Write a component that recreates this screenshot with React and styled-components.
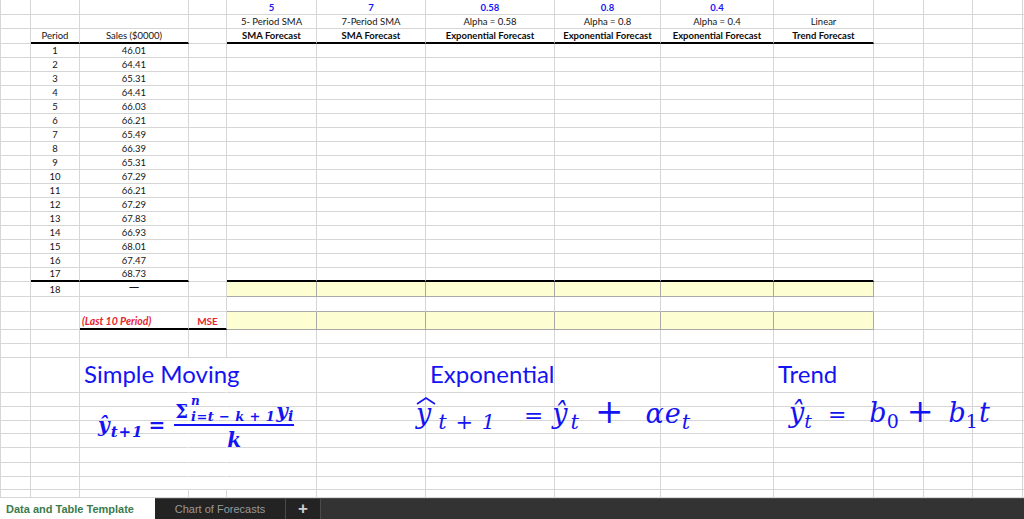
import React from 'react';
import styled, { createGlobalStyle } from 'styled-components';

const BLUE = '#1414f2';
const RED = '#e5262f';
const GRID = '#d6d6d6';
const YBORDER = '#a9a9a9';
const YELLOW = '#fefed3';

const GlobalStyle = createGlobalStyle`
  html, body { margin: 0; padding: 0; background: #fff; }
  body { overflow: hidden; font-family: Lato, "Liberation Sans", sans-serif; }
`;

const COL_WIDTHS = [30, 49, 109, 38, 90, 109, 129, 106, 113, 100, 50, 49, 50];
const COL_TEMPLATE = COL_WIDTHS.map((w) => `${w}px`).join(' ') + ' 1fr';
const NCOLS = COL_WIDTHS.length + 1;

const FORECAST = [4, 5, 6, 7, 8, 9];
const SALES = ['46.01', '64.41', '65.31', '64.41', '66.03', '66.21', '65.49', '66.39', '65.31', '67.29', '66.21', '67.29', '67.83', '66.93', '68.01', '67.47', '68.73'];

const ROWS = [];
ROWS.push({ h: 15, cells: { 4: ['5', 'param'], 5: ['7', 'param'], 6: ['0.58', 'param'], 7: ['0.8', 'param'], 8: ['0.4', 'param'] } });
ROWS.push({ h: 14, cells: { 4: ['5- Period SMA'], 5: ['7-Period SMA'], 6: ['Alpha = 0.58'], 7: ['Alpha = 0.8'], 8: ['Alpha = 0.4'], 9: ['Linear'] } });
ROWS.push({
  h: 15,
  thick: [1, 2, ...FORECAST],
  cells: {
    1: ['Period'], 2: ['Sales ($0000)'],
    4: ['SMA Forecast', 'head'], 5: ['SMA Forecast', 'head'],
    6: ['Exponential Forecast', 'head'], 7: ['Exponential Forecast', 'head'], 8: ['Exponential Forecast', 'head'],
    9: ['Trend Forecast', 'head'],
  },
});
SALES.forEach((v, i) => ROWS.push({ h: 14, thick: i === 16 ? [1, 2, ...FORECAST] : [], cells: { 1: [String(i + 1)], 2: [v] } }));
ROWS.push({ h: 15, yellow: FORECAST, cells: { 1: ['18'], 2: ['\u2014', 'dash'] } });
ROWS.push({ h: 15, edge: FORECAST, cells: {} });
ROWS.push({ h: 18, yellow: FORECAST, thick: [2, 3], cells: { 2: ['(Last 10 Period)', 'note'], 3: ['MSE', 'mse'] } });
ROWS.push({ h: 14 });
ROWS.push({ h: 14 });
[35, 14, 14, 13, 14, 15, 14, 13].forEach((h) => ROWS.push({ h, merged: true }));
ROWS.push({ h: 8 });

const ROW_TEMPLATE = ROWS.map((r) => `${r.h}px`).join(' ');

const Page = styled.div`
  width: 1024px;
  height: 519px;
  display: flex;
  flex-direction: column;
  overflow: hidden;
  background: #fff;
`;

const SheetArea = styled.div`
  position: relative;
  height: 498px;
  overflow: hidden;
`;

const Grid = styled.div`
  display: grid;
  grid-template-columns: ${COL_TEMPLATE};
  grid-template-rows: ${ROW_TEMPLATE};
  border-left: 1px solid ${GRID};
  box-sizing: border-box;
  width: 1024px;
  height: 498px;
`;

const Cell = styled.div`
  box-sizing: border-box;
  min-width: 0;
  display: flex;
  align-items: flex-end;
  justify-content: ${(p) => (p.$left ? 'flex-start' : 'center')};
  padding: 0 2px 2px;
  white-space: nowrap;
  overflow: visible;
  background: ${(p) => (p.$yellow ? YELLOW : '#fff')};
  border-right: 1px solid ${(p) => (p.$hideRight ? '#fff' : p.$yellow ? YBORDER : GRID)};
  border-bottom: ${(p) => (p.$thick ? '2px solid #000' : `1px solid ${p.$yellow || p.$edge ? YBORDER : GRID}`)};
`;

const KIND = {
  plain: { size: 9.5, weight: 400, style: 'normal', color: '#141414' },
  param: { size: 9.5, weight: 700, style: 'normal', color: BLUE },
  head: { size: 9.5, weight: 700, style: 'normal', color: '#0c0c0c' },
  dash: { size: 14, weight: 400, style: 'normal', color: '#141414' },
  note: { size: 10.5, weight: 700, style: 'italic', color: RED },
  mse: { size: 10, weight: 700, style: 'normal', color: RED },
};

const CellText = styled.span`
  font-family: Lato, "Liberation Sans", sans-serif;
  font-size: ${(p) => KIND[p.$kind].size}px;
  font-weight: ${(p) => KIND[p.$kind].weight};
  font-style: ${(p) => KIND[p.$kind].style};
  color: ${(p) => KIND[p.$kind].color};
  line-height: 1;
`;

/* floating text boxes drawn over the sheet */
const SectionLabel = styled.div`
  position: absolute;
  left: ${(p) => p.$x}px;
  top: ${(p) => p.$y}px;
  font-family: Lato, "Liberation Sans", sans-serif;
  font-size: 24px;
  line-height: 24px;
  color: ${BLUE};
  white-space: nowrap;
`;

const MathLine = styled.div`
  position: absolute;
  left: ${(p) => p.$x}px;
  top: ${(p) => p.$y}px;
  font-family: "DejaVu Serif", "Liberation Serif", serif;
  font-style: italic;
  font-weight: ${(p) => (p.$bold ? 700 : 400)};
  font-size: ${(p) => p.$size}px;
  line-height: ${(p) => p.$size}px;
  color: ${BLUE};
  white-space: nowrap;
`;

const MVar = styled.span`
  margin-left: ${(p) => p.$ml || 0}px;
`;

const MSub = styled.span`
  font-size: ${(p) => p.$size}px;
  line-height: 1;
  vertical-align: ${(p) => p.$shift}px;
  margin-left: ${(p) => p.$ml || 0}px;
  letter-spacing: ${(p) => p.$ls || 0}px;
  font-style: ${(p) => (p.$upright ? 'normal' : 'italic')};
`;

const MOp = styled.span`
  font-style: normal;
  font-size: ${(p) => (p.$size ? `${p.$size}px` : 'inherit')};
  margin-left: ${(p) => p.$ml || 0}px;
  margin-right: ${(p) => p.$mr || 0}px;
`;

const HatWrap = styled.span`
  position: relative;
  display: inline-block;
  margin-left: ${(p) => p.$ml || 0}px;
`;

const WideHat = styled.svg`
  position: absolute;
  left: 0px;
  top: -3px;
  overflow: visible;
`;

const Frac = styled.span`
  display: inline-block;
  vertical-align: -15px;
  text-align: center;
`;

const Num = styled.span`
  display: block;
  line-height: 25px;
  border-bottom: 2px solid ${BLUE};
  padding: 0 1px;
`;

const Den = styled.span`
  display: block;
  line-height: 28px;
`;

const Sigma = styled.span`
  font-style: normal;
  font-size: 18px;
`;

const Limits = styled.span`
  display: inline-block;
  vertical-align: -3px;
  line-height: 15px;
  text-align: left;
  margin-left: 3px;
`;

const LimitUpper = styled.span`
  display: block;
  font-size: 12px;
`;

const LimitLower = styled.span`
  display: block;
  font-size: 13px;
  letter-spacing: 0.4px;
`;

/* sheet tabs */
const TabBar = styled.div`
  height: 21px;
  display: flex;
  background: #333;
  font-family: "Liberation Sans", Arial, sans-serif;
`;

const ActiveTab = styled.div`
  width: 155px;
  background: #fff;
  color: #3b7b4c;
  font-size: 11px;
  font-weight: 700;
  display: flex;
  align-items: center;
  padding-left: 6px;
  box-sizing: border-box;
`;

const DarkTab = styled.div`
  width: ${(p) => p.$w}px;
  box-sizing: border-box;
  background: #232323;
  border-top: 1px solid #4a4a4a;
  border-right: 1px solid #4a4a4a;
  color: ${(p) => (p.$plus ? '#d0d0d0' : '#999')};
  font-size: ${(p) => (p.$plus ? 17 : 11)}px;
  font-weight: ${(p) => (p.$plus ? 700 : 400)};
  display: flex;
  align-items: center;
  justify-content: center;
`;

const TabFiller = styled.div`
  flex: 1;
  border-top: 1px solid #4a4a4a;
`;

function Sheet() {
  const cells = [];
  ROWS.forEach((row, r) => {
    for (let c = 0; c < NCOLS; c += 1) {
      const content = row.cells && row.cells[c];
      const kind = content ? content[1] || 'plain' : 'plain';
      cells.push(
        <Cell
          key={`${r}-${c}`}
          $thick={row.thick && row.thick.includes(c)}
          $yellow={row.yellow && row.yellow.includes(c)}
          $edge={row.edge && row.edge.includes(c)}
          $hideRight={row.merged && (c === 2 || c === 3)}
          $left={kind === 'note'}
        >
          {content ? <CellText $kind={kind}>{content[0]}</CellText> : null}
        </Cell>
      );
    }
  });
  return <Grid>{cells}</Grid>;
}

export default function App() {
  return (
    <Page>
      <GlobalStyle />
      <SheetArea>
        <Sheet />

        <SectionLabel $x={84} $y={362}>Simple Moving</SectionLabel>
        <SectionLabel $x={430} $y={362}>Exponential</SectionLabel>
        <SectionLabel $x={778} $y={362}>Trend</SectionLabel>

        <MathLine $x={98} $y={394} $size={20} $bold>
          <MVar>ŷ</MVar>
          <MSub $size={15} $shift={-5} $ml={1} $ls={1}>t+1</MSub>
          <MOp $ml={5} $mr={9}>=</MOp>
          <Frac>
            <Num>
              <Sigma>Σ</Sigma>
              <Limits>
                <LimitUpper>n</LimitUpper>
                <LimitLower>i=t − k + 1</LimitLower>
              </Limits>
              <MVar $ml={1}>y</MVar>
              <MSub $size={14} $shift={-3}>i</MSub>
            </Num>
            <Den>k</Den>
          </Frac>
        </MathLine>

        <MathLine $x={416} $y={398} $size={27}>
          <HatWrap>
            y
            <WideHat width="20" height="8" viewBox="0 0 20 8">
              <path d="M1 7 L10 1 L19 7" fill="none" stroke={BLUE} strokeWidth="1.6" />
            </WideHat>
          </HatWrap>
          <MSub $size={21} $shift={-6} $ml={7} $ls={1}>t + 1</MSub>
          <MOp $ml={28} $size={23}>=</MOp>
          <MVar $ml={9}>ŷ</MVar>
          <MSub $size={21} $shift={-6} $ml={3}>t</MSub>
          <MOp $ml={16} $size={34}>+</MOp>
          <MVar $ml={22}>α</MVar>
          <MVar $ml={1}>e</MVar>
          <MSub $size={21} $shift={-6} $ml={1}>t</MSub>
        </MathLine>

        <MathLine $x={789} $y={398} $size={27}>
          <MVar>ŷ</MVar>
          <MSub $size={19} $shift={-6}>t</MSub>
          <MOp $ml={16} $size={22}>=</MOp>
          <MVar $ml={23}>b</MVar>
          <MSub $size={19} $shift={-6} $upright>0</MSub>
          <MOp $ml={8} $size={32}>+</MOp>
          <MVar $ml={15}>b</MVar>
          <MSub $size={19} $shift={-6} $upright>1</MSub>
          <MVar $ml={1}>t</MVar>
        </MathLine>
      </SheetArea>
      <TabBar>
        <ActiveTab>Data and Table Template</ActiveTab>
        <DarkTab $w={131}>Chart of Forecasts</DarkTab>
        <DarkTab $w={35} $plus>+</DarkTab>
        <TabFiller />
      </TabBar>
    </Page>
  );
}
